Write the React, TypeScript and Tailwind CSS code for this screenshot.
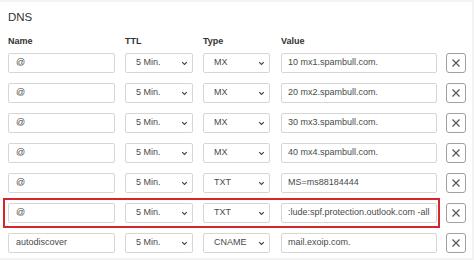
import React from "react";

const rows = [
  { name: "@", ttl: "5 Min.", type: "MX", value: "10 mx1.spambull.com." },
  { name: "@", ttl: "5 Min.", type: "MX", value: "20 mx2.spambull.com." },
  { name: "@", ttl: "5 Min.", type: "MX", value: "30 mx3.spambull.com." },
  { name: "@", ttl: "5 Min.", type: "MX", value: "40 mx4.spambull.com." },
  { name: "@", ttl: "5 Min.", type: "TXT", value: "MS=ms88184444" },
  { name: "@", ttl: "5 Min.", type: "TXT", value: ":lude:spf.protection.outlook.com -all", hl: true },
  { name: "autodiscover", ttl: "5 Min.", type: "CNAME", value: "mail.exoip.com." },
];

function Chevron() {
  return (
    <svg width="7" height="5" viewBox="0 0 7 5" className="shrink-0">
      <path d="M1.2 1.2 L3.5 3.5 L5.8 1.2" fill="none" stroke="#444" strokeWidth="1.2" />
    </svg>
  );
}

function Select({ text, w }: { text: string; w: string }) {
  return (
    <div className={`${w} h-[20px] border border-[#d6d6d6] rounded-[2px] bg-white flex items-center justify-between pl-[10px] pr-[4px] shrink-0`}>
      <span className="text-[9px] text-[#4a4a4a]">{text}</span>
      <Chevron />
    </div>
  );
}

export default function App() {
  return (
    <div
      className="w-[474px] h-[260px] bg-white border-t-2 border-r-2 border-b-2 border-[#f3f3f3] overflow-hidden"
      style={{ fontFamily: '"Liberation Sans", Arial, sans-serif' }}
    >
      <div className="pl-[8px] pt-[8px] text-[11.5px] leading-[14px] text-[#333]">DNS</div>
      <div className="flex pl-[8px] mt-[12px] h-[12px] items-center text-[9px] font-bold text-[#333]">
        <div className="w-[117px]">Name</div>
        <div className="w-[78px]">TTL</div>
        <div className="w-[78px]">Type</div>
        <div>Value</div>
      </div>
      <div className="flex flex-col gap-[10px] mt-[5px] pl-[8px]">
        {rows.map((r, i) => (
          <div key={i} className="relative flex items-center h-[20px]">
            {r.hl && (
              <span className="absolute left-[-5px] top-[-5px] w-[437px] h-[30px] border-2 border-[#d3262d] pointer-events-none" />
            )}
            <div className="w-[107px] h-[20px] border border-[#d6d6d6] rounded-[2px] bg-white flex items-center pl-[7px] text-[9px] text-[#4a4a4a] shrink-0">
              {r.name}
            </div>
            <div className="w-[10px] shrink-0" />
            <Select text={r.ttl} w="w-[68px]" />
            <div className="w-[10px] shrink-0" />
            <Select text={r.type} w="w-[67px]" />
            <div className="w-[11px] shrink-0" />
            <div className="w-[156px] h-[20px] border border-[#d6d6d6] rounded-[2px] bg-white flex items-center pl-[6px] text-[9px] text-[#4a4a4a] shrink-0 overflow-hidden whitespace-nowrap">
              {r.value}
            </div>
            <div className="w-[9px] shrink-0" />
            <div className="w-[20px] h-[20px] border border-[#a0a0a0] rounded-[3px] bg-white flex items-center justify-center shrink-0">
              <svg width="10" height="10" viewBox="0 0 10 10">
                <path d="M1.5 1.5 L8.5 8.5 M8.5 1.5 L1.5 8.5" stroke="#555" strokeWidth="1.2" />
              </svg>
            </div>
          </div>
        ))}
      </div>
    </div>
  );
}
